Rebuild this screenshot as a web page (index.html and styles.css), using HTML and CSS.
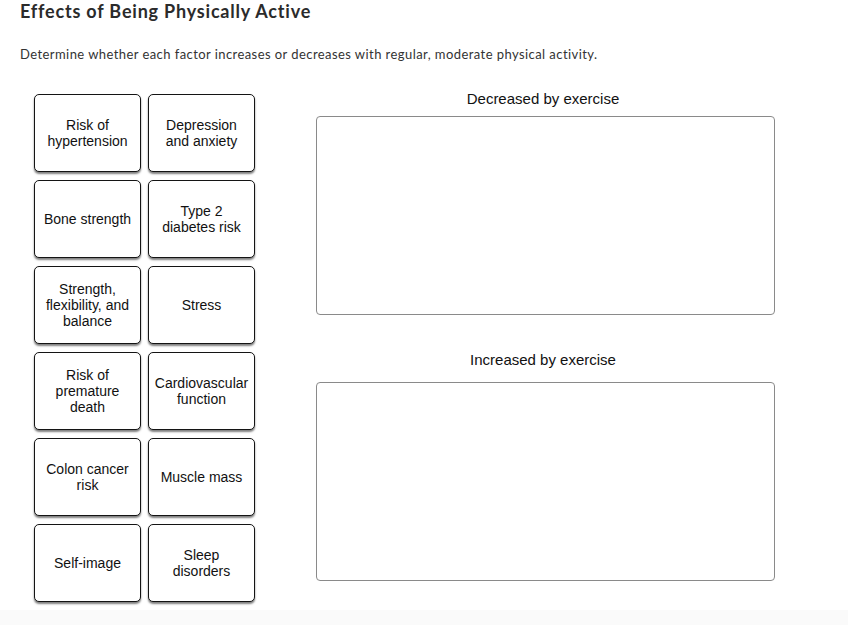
FILE: index.html
```html
<!DOCTYPE html>
<html lang="en">
<head>
    <meta charset="UTF-8">
    <meta name="viewport" content="width=device-width, initial-scale=1.0">
    <title>Effects of Being Physically Active</title>
    <link rel="stylesheet" href="styles.css">
</head>
<body>
    <div class="page">
        <h1 class="title">Effects of Being Physically Active</h1>
        <p class="intro">Determine whether each factor increases or decreases with regular, moderate physical activity.</p>

        <div class="activity">
            <div class="cards">
                <div class="card">Risk of<br>hypertension</div>
                <div class="card">Depression<br>and anxiety</div>
                <div class="card">Bone strength</div>
                <div class="card">Type 2<br>diabetes risk</div>
                <div class="card">Strength,<br>flexibility, and<br>balance</div>
                <div class="card">Stress</div>
                <div class="card">Risk of<br>premature<br>death</div>
                <div class="card">Cardiovascular<br>function</div>
                <div class="card">Colon cancer<br>risk</div>
                <div class="card">Muscle mass</div>
                <div class="card">Self-image</div>
                <div class="card">Sleep<br>disorders</div>
            </div>

            <div class="targets">
                <div class="target">
                    <h3 class="target-label">Decreased by exercise</h3>
                    <div class="drop-zone"></div>
                </div>
                <div class="target target-second">
                    <h3 class="target-label">Increased by exercise</h3>
                    <div class="drop-zone"></div>
                </div>
            </div>
        </div>
    </div>
    <div class="footer-band"></div>
</body>
</html>
```

FILE: styles.css
```css
body {
    margin: 0;
    background: #fff;
    color: #333;
    font-family: Lato, "Open Sans", Arial, sans-serif;
}
.page {
    padding: 0 20px;
    height: 610px;
    box-sizing: border-box;
}
.title {
    margin: 0;
    font-size: 18px;
    line-height: 22px;
    font-weight: 700;
    letter-spacing: 0.8px;
    color: #2b2b2b;
}
.intro {
    margin: 23px 0 0;
    font-size: 13px;
    line-height: 18px;
    letter-spacing: 0.43px;
    color: #333;
}
.activity {
    display: flex;
    margin-top: 27px;
    padding-left: 14px;
}
.cards {
    display: grid;
    grid-template-columns: 107px 107px;
    grid-auto-rows: 78px;
    column-gap: 7px;
    row-gap: 8px;
    margin-top: 4px;
}
.card {
    display: flex;
    align-items: center;
    justify-content: center;
    text-align: center;
    background: #fff;
    border: 1px solid #141414;
    border-radius: 5px;
    box-shadow: 0 2px 2px rgba(0, 0, 0, 0.5);
    font-family: "Liberation Sans", Arial, sans-serif;
    font-size: 14px;
    line-height: 16px;
    color: #111;
}
.targets {
    margin-left: 61px;
    width: 459px;
}
.target-label {
    margin: 0 0 8px;
    padding-right: 5px;
    text-align: center;
    font-family: "Liberation Sans", Arial, sans-serif;
    font-weight: 400;
    font-size: 15px;
    line-height: 18px;
    color: #111;
}
.target-second {
    margin-top: 36px;
}
.target-second .target-label {
    margin-bottom: 13px;
}
.drop-zone {
    height: 197px;
    border: 1px solid #8a8a8a;
    border-radius: 4px;
}
.footer-band {
    height: 15px;
    background: #fafafa;
}
```
